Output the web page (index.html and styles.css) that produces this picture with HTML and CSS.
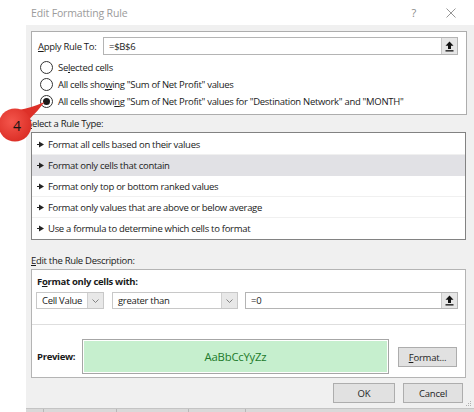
FILE: index.html
```html
<!DOCTYPE html>
<html>
<head>
<meta charset="utf-8">
<link rel="stylesheet" href="styles.css">
</head>
<body>
<div class="titlebar">
  <span class="title">Edit Formatting Rule</span>
  <span class="tb-ctrls">
    <span class="help">?</span>
    <svg class="close" width="10" height="10" viewBox="0 0 10 10"><path d="M0.5 0.5 L9.5 9.5 M9.5 0.5 L0.5 9.5" stroke="#8a8a8a" stroke-width="0.9" fill="none"/></svg>
  </span>
</div>
<div class="dialog">
  <div class="apply-box">
    <div class="apply-row">
      <span class="apply-label"><u>A</u>pply Rule To:</span>
      <div class="ref-input">
        <span class="ref-text">=$B$6</span>
        <span class="ref-btn"><svg width="9" height="11" viewBox="0 0 9 11"><path d="M4.5 0.5 L8.5 4.8 H6 V8 H3 V4.8 H0.5 Z" fill="#111"/><rect x="0.5" y="9.2" width="8" height="1.3" fill="#111"/></svg></span>
      </div>
    </div>
    <div class="radio-row"><span class="radio"></span><span>Se<u>l</u>ected cells</span></div>
    <div class="radio-row"><span class="radio"></span><span>All cells sho<u>w</u>ing "Sum of Net Profit" values</span></div>
    <div class="radio-row"><span class="radio checked"></span><span>All cells showi<u>n</u>g "Sum of Net Profit" values for "Destination Network" and "MONTH"</span></div>
  </div>

  <div class="section-label select-label"><u>S</u>elect a Rule Type:</div>
  <div class="rule-list">
    <div class="rule-item"><svg class="pointer" width="7" height="7" viewBox="0 0 7 7"><path d="M0 3.5 H3" stroke="#222" stroke-width="1"/><path d="M2 0.5 L7 3.5 L2 6.5 Z" fill="#222"/></svg>Format all cells based on their values</div>
    <div class="rule-item selected"><svg class="pointer" width="7" height="7" viewBox="0 0 7 7"><path d="M0 3.5 H3" stroke="#222" stroke-width="1"/><path d="M2 0.5 L7 3.5 L2 6.5 Z" fill="#222"/></svg>Format only cells that contain</div>
    <div class="rule-item"><svg class="pointer" width="7" height="7" viewBox="0 0 7 7"><path d="M0 3.5 H3" stroke="#222" stroke-width="1"/><path d="M2 0.5 L7 3.5 L2 6.5 Z" fill="#222"/></svg>Format only top or bottom ranked values</div>
    <div class="rule-item"><svg class="pointer" width="7" height="7" viewBox="0 0 7 7"><path d="M0 3.5 H3" stroke="#222" stroke-width="1"/><path d="M2 0.5 L7 3.5 L2 6.5 Z" fill="#222"/></svg>Format only values that are above or below average</div>
    <div class="rule-item last"><svg class="pointer" width="7" height="7" viewBox="0 0 7 7"><path d="M0 3.5 H3" stroke="#222" stroke-width="1"/><path d="M2 0.5 L7 3.5 L2 6.5 Z" fill="#222"/></svg>Use a formula to determine which cells to format</div>
  </div>

  <div class="section-label desc-label"><u>E</u>dit the Rule Description:</div>
  <div class="desc-box">
    <div class="desc-top">
      <div class="bold-label">F<u>o</u>rmat only cells with:</div>
      <div class="cond-row">
        <div class="select sel-cell"><span class="sel-text">Cell Value</span><span class="sel-arrow"><svg width="7" height="4" viewBox="0 0 7 4"><path d="M0.5 0.5 L3.5 3.5 L6.5 0.5" stroke="#777" stroke-width="0.9" fill="none"/></svg></span></div>
        <div class="select sel-op"><span class="sel-text">greater than</span><span class="sel-arrow"><svg width="7" height="4" viewBox="0 0 7 4"><path d="M0.5 0.5 L3.5 3.5 L6.5 0.5" stroke="#777" stroke-width="0.9" fill="none"/></svg></span></div>
        <div class="ref-input val-input">
          <span class="ref-text">=0</span>
          <span class="ref-btn"><svg width="9" height="11" viewBox="0 0 9 11"><path d="M4.5 0.5 L8.5 4.8 H6 V8 H3 V4.8 H0.5 Z" fill="#111"/><rect x="0.5" y="9.2" width="8" height="1.3" fill="#111"/></svg></span>
        </div>
      </div>
    </div>
    <div class="preview-row">
      <span class="bold-label preview-label">Preview:</span>
      <div class="preview-box">AaBbCcYyZz</div>
      <button class="btn format-btn"><u>F</u>ormat...</button>
    </div>
  </div>

  <div class="button-row">
    <button class="btn ok-btn">OK</button>
    <button class="btn cancel-btn">Cancel</button>
  </div>
  <div class="bottom-strip"><span class="tick t1"></span><span class="tick t2"></span><span class="tick t3"></span><span class="tick t4"></span></div>
</div>

<svg class="grip" width="7" height="7" viewBox="0 0 7 7"><g fill="#b0b0b0"><rect x="5" y="1" width="1" height="1"/><rect x="3" y="3" width="1" height="1"/><rect x="5" y="3" width="1" height="1"/><rect x="1" y="5" width="1" height="1"/><rect x="3" y="5" width="1" height="1"/><rect x="5" y="5" width="1" height="1"/></g></svg>

<svg class="badge" width="50" height="46" viewBox="0 0 50 46">
  <defs>
    <radialGradient id="rg" cx="0.4" cy="0.4" r="0.7">
      <stop offset="0" stop-color="#f4564c"/>
      <stop offset="1" stop-color="#d92a22"/>
    </radialGradient>
  </defs>
  <path d="M18.5 12 Q31 10 44.5 4 Q37.5 13.5 30 20.5 Z" fill="#dd3028"/>
  <circle cx="15" cy="27" r="16.5" fill="url(#rg)"/>
  <text x="17" y="27" class="badge-text" text-anchor="middle" dominant-baseline="central">4</text>
</svg>
</body>
</html>
```

FILE: styles.css
```css
* { box-sizing: border-box; }

html, body {
  margin: 0;
  padding: 0;
}

body {
  width: 474px;
  height: 412px;
  overflow: hidden;
  background: #ffffff;
  position: relative;
  font-family: "Open Sans", "Noto Sans", sans-serif;
  font-size: 9.5px;
  letter-spacing: -0.3px;
  color: #1a1a1a;
  white-space: nowrap;
}

u { text-decoration: underline; text-underline-offset: 1px; }

.titlebar {
  height: 25px;
  display: flex;
  align-items: center;
  padding-left: 31px;
}

.title {
  font-size: 10.5px;
  letter-spacing: -0.15px;
  color: #9b9b9b;
}

.tb-ctrls {
  margin-left: auto;
  display: flex;
  align-items: center;
  margin-right: 18px;
}

.help {
  font-size: 11px;
  color: #8a8a8a;
  margin-right: 30px;
}

.close { display: block; }

.dialog {
  margin-left: 26px;
  height: 387px;
  background: #f0f0f0;
  padding: 6px 8px 0 5px;
  display: flex;
  flex-direction: column;
}

.apply-box {
  background: #fff;
  border: 1px solid #adadad;
  height: 84px;
  margin-right: -1px;
  padding: 5px 8px 0 6px;
}

.apply-row {
  display: flex;
  align-items: center;
  height: 18px;
}

.apply-label {
  width: 65px;
  flex: none;
}

.ref-input {
  flex: 1;
  height: 18px;
  border: 1px solid #b4b4b4;
  background: #fff;
  display: flex;
  align-items: center;
  padding-left: 5px;
}

.ref-text { flex: 1; }

.ref-btn {
  width: 16px;
  height: 16px;
  background: #e6e6e6;
  border-left: 1px solid #c8c8c8;
  display: flex;
  align-items: center;
  justify-content: center;
}

.ref-btn svg { display: block; }

.radio-row {
  height: 17px;
  display: flex;
  align-items: center;
  padding-left: 2px;
}

.apply-row + .radio-row { margin-top: 4px; }

.radio {
  width: 13px;
  height: 13px;
  border: 1px solid #333;
  border-radius: 50%;
  background: #fff;
  margin-right: 5px;
  flex: none;
  display: flex;
  align-items: center;
  justify-content: center;
}

.radio.checked::after {
  content: "";
  width: 7px;
  height: 7px;
  border-radius: 50%;
  background: #1a1a1a;
}

.section-label {
  height: 14px;
  line-height: 14px;
}

.select-label {
  margin-top: 2px;
  margin-left: -4px;
}

.rule-list {
  margin-top: 1px;
  height: 108px;
  background: #fff;
  border: 1px solid #828282;
  padding-top: 1px;
}

.rule-item {
  height: 21px;
  display: flex;
  align-items: center;
  padding-left: 5px;
  border-bottom: 1px solid #f0f0f0;
}

.rule-item.last { border-bottom: none; }

.rule-item.selected { background: #e1e1e5; border-bottom-color: #e1e1e5; }

.pointer {
  display: block;
  margin-right: 4px;
  flex: none;
}

.desc-label { margin-top: 14px; }

.desc-box {
  margin-top: 1px;
  height: 109px;
  background: #fff;
  border: 1px solid #b4b4b4;
  display: flex;
  flex-direction: column;
}

.desc-top {
  height: 54px;
  padding: 5px 7px 0 4px;
}

.bold-label {
  font-weight: bold;
  height: 14px;
  line-height: 14px;
  padding-left: 1px;
}

.cond-row {
  display: flex;
  margin-top: 3px;
  height: 17px;
}

.select {
  height: 17px;
  border: 1px solid #c8c8c8;
  background: #fff;
  display: flex;
  align-items: center;
}

.sel-text {
  flex: 1;
  padding-left: 5px;
}

.sel-arrow {
  width: 16px;
  height: 15px;
  background: #e8e8e8;
  border-left: 1px solid #d0d0d0;
  display: flex;
  align-items: center;
  justify-content: center;
}

.sel-arrow svg { display: block; }

.sel-cell { width: 68px; }

.sel-op { width: 126px; margin-left: 8px; }

.val-input {
  margin-left: 7px;
  height: 17px;
}

.val-input .ref-btn { height: 15px; }

.preview-row {
  flex: 1;
  border-top: 1px solid #dedede;
  display: flex;
  align-items: center;
  padding: 14px 8px 3px 4px;
}

.preview-label { width: 46px; flex: none; }

.preview-box {
  width: 307px;
  height: 35px;
  border: 1px solid #a6a6a6;
  box-shadow: inset 0 0 0 1px #fff;
  background: #c6efce;
  color: #217a2b;
  font-size: 11.3px;
  letter-spacing: -0.2px;
  display: flex;
  align-items: center;
  justify-content: center;
}

.btn {
  font-family: inherit;
  font-size: 9.5px;
  letter-spacing: -0.2px;
  color: #1e1e1e;
  background: #e1e1e1;
  border: 1px solid #adadad;
  padding: 0;
  height: 20px;
}

.format-btn {
  width: 59px;
  margin-left: 9px;
  margin-top: 1px;
}

.button-row {
  display: flex;
  justify-content: flex-end;
  margin-top: 5px;
  padding-right: 3px;
}

.ok-btn { width: 62px; }
.cancel-btn { width: 60px; margin-left: 8px; }

.bottom-strip {
  margin-top: auto;
  margin-left: -5px;
  margin-right: -8px;
  height: 4px;
  background: #d9d9d9;
  border-top: 1px solid #c4c4c4;
  display: flex;
}

.tick {
  width: 1px;
  height: 3px;
  background: #b8b8b8;
}

.t1 { margin-left: 17px; }
.t2 { margin-left: 72px; }
.t3 { margin-left: 71px; }
.t4 { margin-left: 56px; }

.grip {
  position: absolute;
  right: 2px;
  bottom: 5px;
}

.badge {
  position: absolute;
  left: 0;
  top: 98px;
}

.badge-text {
  font-family: "Open Sans", "Noto Sans", sans-serif;
  font-size: 14px;
  letter-spacing: 0;
  fill: #151515;
}
```
